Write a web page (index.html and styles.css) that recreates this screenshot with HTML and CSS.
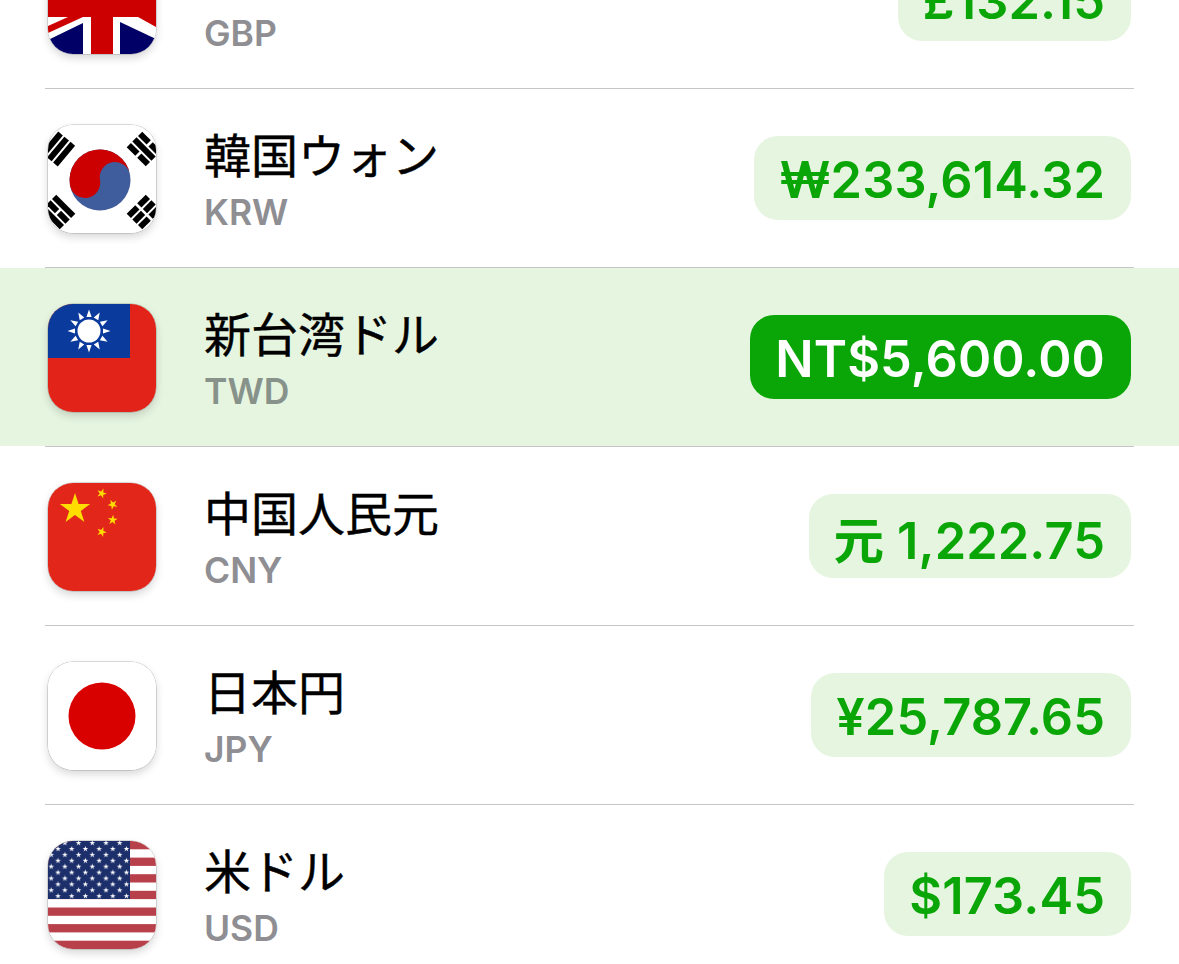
FILE: index.html
```html
<!DOCTYPE html>
<html lang="ja">
  <head>
    <meta charset="UTF-8" />
    <title>通貨</title>
    <link rel="stylesheet" href="styles.css">
  </head>
  <body>
    <svg class="defs" width="0" height="0">
      <defs>
        <polygon id="star" points="0,-1 .225,-.309 .951,-.309 .363,.118 .588,.809 0,.382 -.588,.809 -.363,.118 -.951,-.309 -.225,-.309" />
        <polygon id="ray" points="-2.6,-14 2.6,-14 0,-21.5" />
        <pattern id="us-stars" width="13.7" height="11.8" patternUnits="userSpaceOnUse" x="-0.2" y="-0.9">
          <use href="#star" transform="translate(3.4 2.9) scale(3)" fill="#fff" />
          <use href="#star" transform="translate(10.2 8.8) scale(3)" fill="#fff" />
        </pattern>
      </defs>
    </svg>
    <div class="list">
      <div class="row">
        <svg class="flag" viewBox="0 0 108 108">
          <rect width="108" height="108" fill="#fff" />
          <polygon points="35,77 0,94 0,108 35,108" fill="#000066" />
          <polygon points="72,76 108,93 108,108 72,108" fill="#000066" />
          <polygon points="0,80 20,71 35,71 0,87" fill="#cc0000" />
          <polygon points="90,71 108,71 108,81" fill="#cc0000" />
          <rect x="0" y="0" width="108" height="71" fill="#cc0000" />
          <rect x="43" y="0" width="22" height="108" fill="#cc0000" />
        </svg>
        <div class="info">
          <div class="name">英国ポンド</div>
          <div class="code">GBP</div>
        </div>
        <div class="amount">£132.15</div>
      </div>
      <hr class="sep" />
      <div class="row">
        <svg class="flag" viewBox="0 0 108 108">
          <rect width="108" height="108" fill="#fff" />
          <g transform="translate(52 55) rotate(-10)">
            <circle r="30.5" fill="#3f5c9c" />
            <path d="M-30.5 0A30.5 30.5 0 0 1 30.5 0A15.25 15.25 0 0 0 0 0A15.25 15.25 0 0 1 -30.5 0Z" fill="#cc0000" />
          </g>
          <g transform="translate(10 24) rotate(-50) scale(.9 1)">
            <rect x="-15" y="-11" width="30" height="6" />
            <rect x="-15" y="-3" width="30" height="6" />
            <rect x="-15" y="5" width="30" height="6" />
          </g>
          <g transform="translate(96 24) rotate(45) scale(.9 1)">
            <rect x="-15" y="-11" width="13.5" height="6" />
            <rect x="1.5" y="-11" width="13.5" height="6" />
            <rect x="-15" y="-3" width="30" height="6" />
            <rect x="-15" y="5" width="13.5" height="6" />
            <rect x="1.5" y="5" width="13.5" height="6" />
          </g>
          <g transform="translate(10 87) rotate(45) scale(.9 1)">
            <rect x="-15" y="-11" width="30" height="6" />
            <rect x="-15" y="-3" width="13.5" height="6" />
            <rect x="1.5" y="-3" width="13.5" height="6" />
            <rect x="-15" y="5" width="30" height="6" />
          </g>
          <g transform="translate(96 87) rotate(-45) scale(.9 1)">
            <rect x="-15" y="-11" width="13.5" height="6" />
            <rect x="1.5" y="-11" width="13.5" height="6" />
            <rect x="-15" y="-3" width="13.5" height="6" />
            <rect x="1.5" y="-3" width="13.5" height="6" />
            <rect x="-15" y="5" width="13.5" height="6" />
            <rect x="1.5" y="5" width="13.5" height="6" />
          </g>
        </svg>
        <div class="info">
          <div class="name">韓国ウォン</div>
          <div class="code">KRW</div>
        </div>
        <div class="amount">₩233,614.32</div>
      </div>
      <hr class="sep" />
      <div class="row selected">
        <svg class="flag" viewBox="0 0 108 108">
          <rect width="108" height="108" fill="#e2231a" />
          <rect width="82" height="54" fill="#0a3a9c" />
          <g transform="translate(41 27)" fill="#fff">
            <use href="#ray" />
            <use href="#ray" transform="rotate(30)" />
            <use href="#ray" transform="rotate(60)" />
            <use href="#ray" transform="rotate(90)" />
            <use href="#ray" transform="rotate(120)" />
            <use href="#ray" transform="rotate(150)" />
            <use href="#ray" transform="rotate(180)" />
            <use href="#ray" transform="rotate(210)" />
            <use href="#ray" transform="rotate(240)" />
            <use href="#ray" transform="rotate(270)" />
            <use href="#ray" transform="rotate(300)" />
            <use href="#ray" transform="rotate(330)" />
            <circle r="11.5" />
          </g>
        </svg>
        <div class="info">
          <div class="name">新台湾ドル</div>
          <div class="code">TWD</div>
        </div>
        <div class="amount">NT$5,600.00</div>
      </div>
      <hr class="sep" />
      <div class="row">
        <svg class="flag" viewBox="0 0 108 108">
          <rect width="108" height="108" fill="#e2261a" />
          <g fill="#ffdd00">
            <use href="#star" transform="translate(27 26) scale(16)" />
            <use href="#star" transform="translate(53.7 10.5) rotate(20) scale(5.2)" />
            <use href="#star" transform="translate(64.7 21.5) rotate(45) scale(5.2)" />
            <use href="#star" transform="translate(64.7 37) rotate(5) scale(5.2)" />
            <use href="#star" transform="translate(53.7 49) rotate(20) scale(5.2)" />
          </g>
        </svg>
        <div class="info">
          <div class="name">中国人民元</div>
          <div class="code">CNY</div>
        </div>
        <div class="amount">元 1,222.75</div>
      </div>
      <hr class="sep" />
      <div class="row">
        <svg class="flag" viewBox="0 0 108 108">
          <rect width="108" height="108" fill="#fff" />
          <circle cx="54" cy="54" r="33.5" fill="#d90000" />
        </svg>
        <div class="info">
          <div class="name">日本円</div>
          <div class="code">JPY</div>
        </div>
        <div class="amount">¥25,787.65</div>
      </div>
      <hr class="sep" />
      <div class="row">
        <svg class="flag" viewBox="0 0 108 108">
          <rect width="108" height="108" fill="#fff" />
          <g fill="#b8404a">
            <rect y="0" width="108" height="8.3" />
            <rect y="16.6" width="108" height="8.3" />
            <rect y="33.2" width="108" height="8.3" />
            <rect y="49.8" width="108" height="8.3" />
            <rect y="66.5" width="108" height="8.3" />
            <rect y="83.1" width="108" height="8.3" />
            <rect y="99.7" width="108" height="8.3" />
          </g>
          <rect width="82" height="58" fill="#1c2f6b" />
          <rect width="82" height="58" fill="url(#us-stars)" />
        </svg>
        <div class="info">
          <div class="name">米ドル</div>
          <div class="code">USD</div>
        </div>
        <div class="amount">$173.45</div>
      </div>
    </div>
  </body>
</html>
```

FILE: styles.css
```css
html,
body {
  margin: 0;
  padding: 0;
  height: 964px;
  overflow: hidden;
  background: #ffffff;
  font-family: Inter, "Noto Sans CJK JP", sans-serif;
}
.defs {
  position: absolute;
}
.list {
  margin-top: -90px;
}
.row {
  height: 178px;
  display: flex;
  align-items: center;
  padding: 0 48px;
  box-sizing: border-box;
}
.row.selected {
  background: #e6f5e0;
}
.sep {
  margin: 0 45px;
  height: 1px;
  border: none;
  background: #c6c6c8;
}
.flag {
  width: 108px;
  height: 108px;
  flex-shrink: 0;
  margin-top: 2px;
  border-radius: 25px;
  box-shadow: 0 0 0 0.5px rgba(0, 0, 0, 0.25), 0 4px 9px rgba(0, 0, 0, 0.16);
}
.info {
  margin-left: 48px;
  flex: 1;
  margin-top: 3px;
}
.name {
  font-family: "Noto Sans CJK JP", sans-serif;
  font-size: 47px;
  line-height: 56px;
  color: #000000;
  -webkit-text-stroke: 0.4px #000000;
}
.code {
  margin-top: 11px;
  font-size: 35.5px;
  line-height: 42px;
  font-weight: 600;
  color: #8e8e93;
}
.selected .code {
  color: #87928a;
}
.amount {
  height: 84px;
  padding: 2px 26px 0 25px;
  box-sizing: border-box;
  display: flex;
  align-items: center;
  border-radius: 24px;
  background: #e6f5e0;
  color: #0aa506;
  font-size: 50.5px;
  font-weight: 600;
  letter-spacing: 0.1px;
  white-space: pre;
}
.selected .amount {
  background: #0aa506;
  color: #ffffff;
}
```
